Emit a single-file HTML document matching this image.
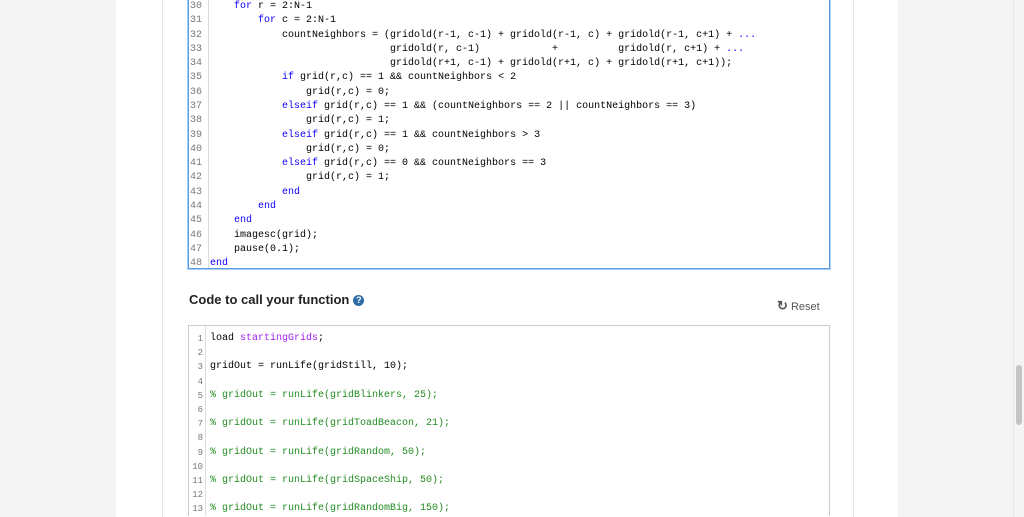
<!DOCTYPE html>
<html><head><style>
html,body{margin:0;width:1024px;height:517px;overflow:hidden}
body{background:#f4f4f4;position:relative;font-family:"Liberation Sans",sans-serif}
.panel{position:absolute;left:116px;top:0;width:782px;height:517px;background:#fff}
.inner{position:absolute;left:162px;top:0;width:690px;height:517px;background:#fff;border-left:1px solid #e6e6e6;border-right:1px solid #e6e6e6}
.ed{position:absolute;font-family:"Liberation Mono",monospace;font-size:10px;background:#fff;overflow:hidden}
.ed .g{position:absolute;left:0;top:0;bottom:0;background:#fff;border-right:1px solid #ddd;color:#777;text-align:right}
.ed pre{margin:0;font:inherit;position:absolute;top:0;white-space:pre;color:#000}
.k{color:#0e00ff}.c{color:#228b22}.s{color:#a020f0}
#e1{left:188px;top:0px;width:640px;height:268px;border:1px solid #5b9be6;border-top:none;box-shadow:0 0 0 1px #a9cdf5}
#e1 .g{width:17px;padding-right:1px;line-height:14.28px;text-align:left;padding-left:1px}
#e1 pre{left:21px;line-height:14.28px}
#e2{left:188px;top:325px;width:640px;height:190px;border:1px solid #ccc;border-bottom:none}
#e2 .g{width:14px;padding-right:2px;line-height:14.2px;padding-top:6px;font-size:9px}
#e2 pre{left:21px;top:6px;line-height:14.2px}
.title{position:absolute;left:189px;top:292px;font-size:13px;font-weight:bold;color:#222}
.q{display:inline-block;width:11px;height:11px;border-radius:50%;background:#2f6ca8;color:#fff;font-size:9px;text-align:center;line-height:11px;vertical-align:middle;margin-left:4px}
.reset{position:absolute;left:777px;top:298px;font-size:11px;color:#555}
.sb{position:absolute;left:1013px;top:0;width:11px;height:517px;background:#f4f4f4;border-left:1px solid #e8e8e8}
.th{position:absolute;left:1016px;top:365px;width:6px;height:60px;background:#c4c4c4;border-radius:3px}
</style></head><body>
<div class="panel"></div><div class="inner"></div>
<div class="ed" id="e1"><div class="g">30<br>31<br>32<br>33<br>34<br>35<br>36<br>37<br>38<br>39<br>40<br>41<br>42<br>43<br>44<br>45<br>46<br>47<br>48</div><pre>    <span class="k">for</span> r = 2:N-1
        <span class="k">for</span> c = 2:N-1
            countNeighbors = (gridold(r-1, c-1) + gridold(r-1, c) + gridold(r-1, c+1) + <span class="k">...</span>
                              gridold(r, c-1)            +          gridold(r, c+1) + <span class="k">...</span>
                              gridold(r+1, c-1) + gridold(r+1, c) + gridold(r+1, c+1));
            <span class="k">if</span> grid(r,c) == 1 &amp;&amp; countNeighbors &lt; 2
                grid(r,c) = 0;
            <span class="k">elseif</span> grid(r,c) == 1 &amp;&amp; (countNeighbors == 2 || countNeighbors == 3)
                grid(r,c) = 1;
            <span class="k">elseif</span> grid(r,c) == 1 &amp;&amp; countNeighbors &gt; 3
                grid(r,c) = 0;
            <span class="k">elseif</span> grid(r,c) == 0 &amp;&amp; countNeighbors == 3
                grid(r,c) = 1;
            <span class="k">end</span>
        <span class="k">end</span>
    <span class="k">end</span>
    imagesc(grid);
    pause(0.1);
<span class="k">end</span></pre></div>
<div class="title">Code to call your function<span class="q">?</span></div>
<div class="reset"><span style="font-size:13px;font-weight:bold">&#x21bb;</span> Reset</div>
<div class="ed" id="e2"><div class="g">1<br>2<br>3<br>4<br>5<br>6<br>7<br>8<br>9<br>10<br>11<br>12<br>13</div><pre>load <span class="s">startingGrids</span>;

gridOut = runLife(gridStill, 10);

<span class="c">% gridOut = runLife(gridBlinkers, 25);</span>

<span class="c">% gridOut = runLife(gridToadBeacon, 21);</span>

<span class="c">% gridOut = runLife(gridRandom, 50);</span>

<span class="c">% gridOut = runLife(gridSpaceShip, 50);</span>

<span class="c">% gridOut = runLife(gridRandomBig, 150);</span></pre></div>
<div class="sb"></div><div class="th"></div>
</body></html>
